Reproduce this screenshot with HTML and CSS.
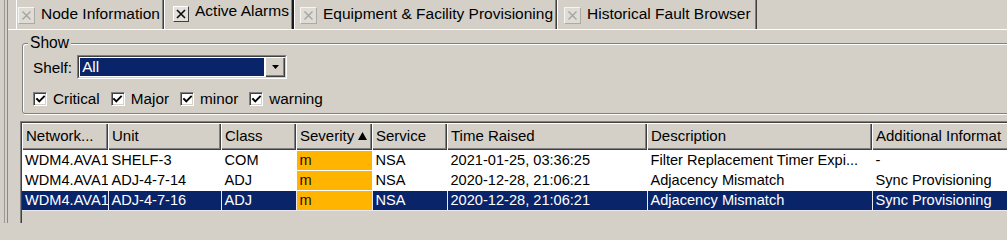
FILE: index.html
```html
<!DOCTYPE html>
<html>
<head>
<meta charset="utf-8">
<link rel="stylesheet" href="styles.css">
</head>
<body>
<div class="window">
  <div class="frame">
    <div class="tabs">
      <div class="tab t1">
        <span class="close"><svg width="15" height="15" viewBox="0 0 15 15"><path d="M3.5 3.5 L11.5 11.5 M11.5 3.5 L3.5 11.5" /></svg></span>
        <span class="label">Node Information</span>
      </div>
      <div class="tab active t2">
        <span class="close"><svg width="14" height="14" viewBox="0 0 14 14"><path d="M3 3 L11 11 M11 3 L3 11" /></svg></span>
        <span class="label">Active Alarms</span>
      </div>
      <div class="tab t3">
        <span class="close"><svg width="15" height="15" viewBox="0 0 15 15"><path d="M3.5 3.5 L11.5 11.5 M11.5 3.5 L3.5 11.5" /></svg></span>
        <span class="label">Equipment &amp; Facility Provisioning</span>
      </div>
      <div class="tab t4">
        <span class="close"><svg width="15" height="15" viewBox="0 0 15 15"><path d="M3.5 3.5 L11.5 11.5 M11.5 3.5 L3.5 11.5" /></svg></span>
        <span class="label">Historical Fault Browser</span>
      </div>
    </div>
    <div class="pane">
      <div class="group">
        <div class="legend">Show</div>
        <div class="shelf">
          <span class="shelf-label">Shelf:</span>
          <div class="combo">
            <div class="combo-inner">
              <div class="combo-value">All</div>
              <div class="combo-btn"><svg width="7" height="4" viewBox="0 0 7 4"><polygon points="0,0 7,0 3.5,4" /></svg></div>
            </div>
          </div>
        </div>
        <div class="checks">
          <label class="check"><span class="box"><svg width="11" height="11" viewBox="0 0 11 11"><path d="M2 5 L4.3 7.4 L9 2.6" /></svg></span><span>Critical</span></label>
          <label class="check"><span class="box"><svg width="11" height="11" viewBox="0 0 11 11"><path d="M2 5 L4.3 7.4 L9 2.6" /></svg></span><span>Major</span></label>
          <label class="check"><span class="box"><svg width="11" height="11" viewBox="0 0 11 11"><path d="M2 5 L4.3 7.4 L9 2.6" /></svg></span><span>minor</span></label>
          <label class="check"><span class="box"><svg width="11" height="11" viewBox="0 0 11 11"><path d="M2 5 L4.3 7.4 L9 2.6" /></svg></span><span>warning</span></label>
        </div>
      </div>
      <div class="table-wrap">
        <table class="alarms">
          <colgroup>
            <col class="c-net"><col class="c-unit"><col class="c-class"><col class="c-sev"><col class="c-svc"><col class="c-time"><col class="c-desc"><col class="c-add">
          </colgroup>
          <thead>
            <tr>
              <th>Network...</th>
              <th>Unit</th>
              <th>Class</th>
              <th><span class="sev-head">Severity<svg class="sort" width="9" height="8" viewBox="0 0 9 8"><polygon points="4.5,0 9,8 0,8" /></svg></span></th>
              <th>Service</th>
              <th>Time Raised</th>
              <th>Description</th>
              <th>Additional Informat</th>
            </tr>
          </thead>
          <tbody>
            <tr>
              <td>WDM4.AVA1</td><td>SHELF-3</td><td>COM</td><td class="sev">m</td><td>NSA</td><td>2021-01-25, 03:36:25</td><td>Filter Replacement Timer Expi...</td><td>-</td>
            </tr>
            <tr>
              <td>WDM4.AVA1</td><td>ADJ-4-7-14</td><td>ADJ</td><td class="sev">m</td><td>NSA</td><td>2020-12-28, 21:06:21</td><td>Adjacency Mismatch</td><td>Sync Provisioning</td>
            </tr>
            <tr class="selected">
              <td>WDM4.AVA1</td><td>ADJ-4-7-16</td><td>ADJ</td><td class="sev">m</td><td>NSA</td><td>2020-12-28, 21:06:21</td><td>Adjacency Mismatch</td><td>Sync Provisioning</td>
            </tr>
          </tbody>
        </table>
      </div>
    </div>
  </div>
</div>
</body>
</html>
```
FILE: styles.css
```css
* { box-sizing: border-box; }
html, body { margin: 0; padding: 0; }
body {
  width: 1007px;
  height: 231px;
  overflow: hidden;
  background: #d4d0c8;
  font-family: "Liberation Sans", Arial, sans-serif;
  font-size: 15.3px;
  color: #000;
}
.window {
  margin-left: 4px;
  height: 223px;
  border-left: 1px solid #9c9a96;
  padding-left: 2px;
}
.frame {
  height: 100%;
  border-left: 1px solid #8c8a86;
  display: flex;
  flex-direction: column;
}

/* tabs */
.tabs {
  display: flex;
  height: 29px;
  padding-left: 8px;
  flex: none;
}
.tab {
  display: flex;
  align-items: flex-start;
  flex: none;
  height: 29px;
  border-left: 1px solid #fff;
  border-right: 1px solid #404040;
  box-shadow: inset -1px 0 0 #808080;
  padding: 0 0 0 1px;
  font-size: 15.5px;
}
.tab .close {
  flex: none;
  width: 17px;
  height: 17px;
  margin-top: 7px;
  background: #dfdcd6;
  border: 1px solid;
  border-color: #f6f5f2 #acaaa5 #acaaa5 #f6f5f2;
}
.tab .close svg { display: block; }
.tab .close path { stroke: #a6a4a0; stroke-width: 1.4; fill: none; }
.tab .label {
  margin-left: 6px;
  margin-top: 5px;
  line-height: 17px;
  white-space: nowrap;
}
.tab.t1 { width: 148px; }
.tab.t2 { width: 130px; }
.tab.t3 { width: 263px; padding-left: 5px; }
.tab.t4 { width: 200px; padding-left: 6px; }
.tab.active {
  padding-left: 8px;
  border-right: 2px solid #1a1a1a;
}
.tab.active .close {
  width: 16px;
  height: 16px;
  margin-top: 6px;
  background: #e4e1dc;
  border-color: #ffffff #404040 #404040 #ffffff;
}
.tab.active .close path { stroke: #111; stroke-width: 1.7; }
.tab.active .label { margin-top: 2px; }

/* content pane */
.pane {
  flex: 1;
  border-top: 1px solid #fff;
  padding-left: 14px;
  overflow: hidden;
  display: flex;
  flex-direction: column;
}

.group {
  flex: none;
  margin: 13px -40px 0 0;
  border: 1px solid #808080;
  border-radius: 3px;
  box-shadow: inset 1px 1px 0 #fff, 1px 1px 0 #fff;
  padding: 0 0 7px 0;
}
.legend {
  width: fit-content;
  margin: -9px 0 0 5px;
  padding: 0 2px;
  line-height: 16px;
  background: #d4d0c8;
  font-size: 15.6px;
}
.shelf {
  display: flex;
  align-items: center;
  gap: 5px;
  height: 24px;
  margin-top: 4px;
  padding-left: 10px;
}
.shelf-label { line-height: 17px; }
.combo {
  width: 210px;
  height: 24px;
  border: 1px solid;
  border-color: #808080 #fff #fff #808080;
}
.combo-inner {
  height: 100%;
  border: 1px solid;
  border-color: #404040 #d4d0c8 #d4d0c8 #404040;
  background: #fff;
  display: flex;
}
.combo-value {
  flex: 1;
  margin: 1px;
  background: #0a246a;
  color: #fff;
  padding-left: 2px;
  line-height: 18px;
}
.combo-btn {
  width: 20px;
  flex: none;
  background: #d4d0c8;
  box-shadow: inset 1px 1px 0 #fff, inset -1px -1px 0 #404040, inset -2px -2px 0 #808080;
  display: flex;
  align-items: center;
  justify-content: center;
}
.combo-btn svg { display: block; fill: #000; margin-top: -1px; }

.checks {
  display: flex;
  align-items: center;
  gap: 11px;
  height: 14px;
  margin-top: 13px;
  padding-left: 10px;
}
.check {
  display: flex;
  align-items: center;
  gap: 6px;
  line-height: 14px;
}
.box {
  width: 14px;
  height: 14px;
  flex: none;
  background: #fff;
  border: 1px solid;
  border-color: #808080 #fff #fff #808080;
  box-shadow: inset 1px 1px 0 #404040, inset -1px -1px 0 #d4d0c8;
  display: flex;
  align-items: center;
  justify-content: center;
}
.box svg { display: block; }
.box path { stroke: #000; stroke-width: 1.9; fill: none; stroke-linecap: square; }

/* table */
.table-wrap {
  flex: 1;
  margin: 7px 0 0 -2px;
  border-top: 1px solid #808080;
  border-left: 1px solid #808080;
  padding: 1px 0 0 1px;
  box-shadow: inset 1px 1px 0 #404040;
  overflow: hidden;
}
.alarms {
  table-layout: fixed;
  border-collapse: collapse;
  width: 1070px;
}
.c-net { width: 86px; }
.c-unit { width: 113px; }
.c-class { width: 75px; }
.c-sev { width: 76px; }
.c-svc { width: 75px; }
.c-time { width: 200px; }
.c-desc { width: 225px; }
.c-add { width: 220px; }
.alarms th {
  height: 27px;
  padding: 0 4px 1px;
  text-align: left;
  font-weight: normal;
  font-size: 15px;
  white-space: nowrap;
  overflow: hidden;
  background: #d4d0c8;
  box-shadow: inset 1px 1px 0 #fff, inset -1px -1px 0 #404040, inset -2px -2px 0 #808080;
}
.sev-head { display: inline-flex; align-items: center; gap: 4px; }
.sort { display: block; fill: #000; }
.alarms td {
  height: 20px;
  padding: 0 3px;
  font-size: 14.6px;
  white-space: nowrap;
  overflow: hidden;
  background: #fff;
  border: 1px solid #fff;
}
.alarms td:first-child { border-left: none; }
.alarms tr.selected td {
  background: #0a246a;
  color: #fff;
  border-color: #e8e8ee;
}
.alarms td.sev,
.alarms tr.selected td.sev {
  background: #ffb400;
  color: #1a1200;
}
```
